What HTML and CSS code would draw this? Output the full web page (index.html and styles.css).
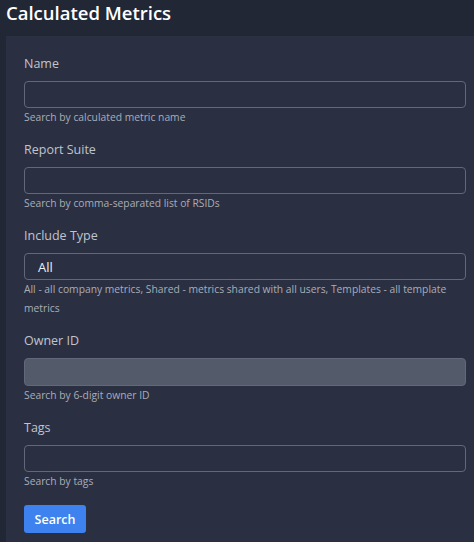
FILE: index.html
```html
<!DOCTYPE html>
<html lang="en">
<head>
<meta charset="utf-8">
<title>Calculated Metrics</title>
<link rel="stylesheet" href="styles.css">
</head>
<body>
<h1 class="title">Calculated Metrics</h1>
<div class="card">
  <form class="form">
    <div class="group">
      <label class="label" for="name">Name</label>
      <input class="input" id="name" type="text">
      <div class="help">Search by calculated metric name</div>
    </div>
    <div class="group">
      <label class="label" for="rs">Report Suite</label>
      <input class="input" id="rs" type="text">
      <div class="help">Search by comma-separated list of RSIDs</div>
    </div>
    <div class="group">
      <label class="label" for="type">Include Type</label>
      <div class="input select" id="type">All</div>
      <div class="help">All - all company metrics, Shared - metrics shared with all users, Templates - all template metrics</div>
    </div>
    <div class="group">
      <label class="label" for="owner">Owner ID</label>
      <input class="input disabled" id="owner" type="text" disabled>
      <div class="help">Search by 6-digit owner ID</div>
    </div>
    <div class="group">
      <label class="label" for="tags">Tags</label>
      <input class="input" id="tags" type="text">
      <div class="help">Search by tags</div>
    </div>
    <button class="btn" type="button">Search</button>
  </form>
</div>
</body>
</html>
```

FILE: styles.css
```css
* { box-sizing: border-box; }
html, body { height: 100%; }
body {
  margin: 0;
  background: #222736;
  font-family: "Open Sans", "Liberation Sans", sans-serif;
  display: flex;
  flex-direction: column;
  overflow: hidden;
}
.title {
  margin: 0;
  padding: 0 6px;
  height: 36px;
  line-height: 25px;
  font-size: 18.5px;
  font-weight: 600;
  color: #ffffff;
}
.card {
  flex: 1;
  margin-left: 6px;
  background: #2a3042;
  padding: 18px 8px 0 18px;
}
.form { display: flex; flex-direction: column; }
.group {
  display: flex;
  flex-direction: column;
  margin-bottom: 13px;
}
.label {
  height: 20px;
  line-height: 20px;
  font-size: 12.5px;
  color: #c0c4cf;
  margin-bottom: 7px;
}
.input {
  height: 27px;
  width: 100%;
  border: 1px solid #626879;
  border-radius: 4px;
  background: #2a3042;
  color: #e9ecef;
  font: inherit;
  font-size: 13px;
  padding: 0 13px;
  outline: none;
}
.select {
  display: flex;
  align-items: center;
  color: #eceef2;
}
.disabled {
  height: 28px;
  background: #535a69;
  border-color: #626879;
}
.help {
  font-size: 10.3px;
  line-height: 19px;
  color: #a9adb8;
}
.btn {
  margin-top: 1px;
  align-self: flex-start;
  height: 28px;
  width: 62px;
  border: 0;
  border-radius: 3px;
  background: #3d82ee;
  color: #ffffff;
  font: inherit;
  font-size: 12.5px;
  font-weight: 600;
}
```
